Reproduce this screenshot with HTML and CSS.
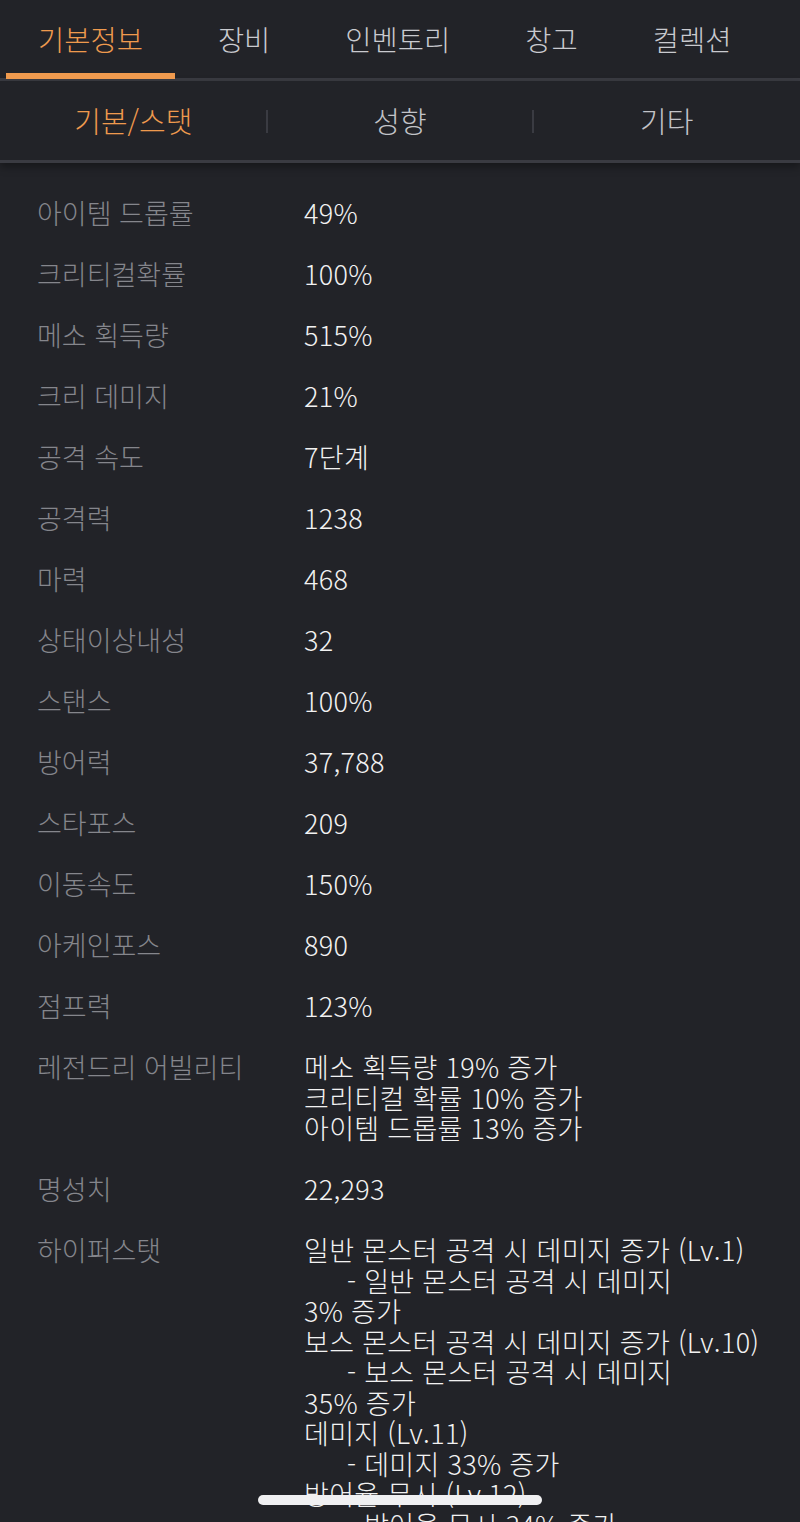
FILE: index.html
```html
<!DOCTYPE html>
<html lang="ko">
<head>
    <meta charset="UTF-8">
    <meta name="viewport" content="width=device-width, initial-scale=1.0">
    <title>캐릭터 정보</title>
    <link rel="stylesheet" href="styles.css">
</head>
<body>

    <nav class="tabs">
        <div class="tab active">기본정보</div>
        <div class="tab">장비</div>
        <div class="tab">인벤토리</div>
        <div class="tab">창고</div>
        <div class="tab">컬렉션</div>
    </nav>

    <div class="subtabs">
        <div class="subtab active">기본/스탯</div>
        <div class="subtab">성향</div>
        <div class="subtab">기타</div>
    </div>

    <div class="stats">
        <div class="row"><div class="label">아이템 드롭률</div><div class="value">49%</div></div>
        <div class="row"><div class="label">크리티컬확률</div><div class="value">100%</div></div>
        <div class="row"><div class="label">메소 획득량</div><div class="value">515%</div></div>
        <div class="row"><div class="label">크리 데미지</div><div class="value">21%</div></div>
        <div class="row"><div class="label">공격 속도</div><div class="value">7단계</div></div>
        <div class="row"><div class="label">공격력</div><div class="value">1238</div></div>
        <div class="row"><div class="label">마력</div><div class="value">468</div></div>
        <div class="row"><div class="label">상태이상내성</div><div class="value">32</div></div>
        <div class="row"><div class="label">스탠스</div><div class="value">100%</div></div>
        <div class="row"><div class="label">방어력</div><div class="value">37,788</div></div>
        <div class="row"><div class="label">스타포스</div><div class="value">209</div></div>
        <div class="row"><div class="label">이동속도</div><div class="value">150%</div></div>
        <div class="row"><div class="label">아케인포스</div><div class="value">890</div></div>
        <div class="row"><div class="label">점프력</div><div class="value">123%</div></div>
        <div class="row">
            <div class="label">레전드리 어빌리티</div>
            <div class="value">
                <div>메소 획득량 19% 증가</div>
                <div>크리티컬 확률 10% 증가</div>
                <div>아이템 드롭률 13% 증가</div>
            </div>
        </div>
        <div class="row"><div class="label">명성치</div><div class="value">22,293</div></div>
        <div class="row">
            <div class="label">하이퍼스탯</div>
            <div class="value">
                <div>일반 몬스터 공격 시 데미지 증가 (Lv.1)</div>
                <div class="sub">- 일반 몬스터 공격 시 데미지</div>
                <div>3% 증가</div>
                <div>보스 몬스터 공격 시 데미지 증가 (Lv.10)</div>
                <div class="sub">- 보스 몬스터 공격 시 데미지</div>
                <div>35% 증가</div>
                <div>데미지 (Lv.11)</div>
                <div class="sub">- 데미지 33% 증가</div>
                <div>방어율 무시 (Lv.12)</div>
                <div class="sub">- 방어율 무시 34% 증가</div>
            </div>
        </div>
    </div>

    <div class="home-indicator"></div>

</body>
</html>
```

FILE: styles.css
```css
body {
    margin: 0;
    padding: 0;
    background-color: #222328;
    font-family: "Noto Sans CJK KR", "Noto Sans", sans-serif;
    font-weight: 300;
    color: #f2f2f2;
}

/* Top tabs */
.tabs {
    display: flex;
    gap: 11px;
    padding-left: 6px;
    height: 78px;
    border-bottom: 3px solid #3a3b42;
}

.tab {
    position: relative;
    padding: 0 32px;
    font-size: 28.5px;
    line-height: 78px;
    color: #c9cacf;
}

.tab.active {
    color: #ef9a4e;
}

.tab.active::after {
    content: '';
    position: absolute;
    left: 0;
    right: 0;
    bottom: -1px;
    height: 6px;
    background-color: #ef9a4e;
}

/* Sub tabs */
.subtabs {
    display: grid;
    grid-template-columns: 1fr 1fr 1fr;
    height: 79px;
    border-bottom: 3px solid #3a3b42;
    box-shadow: 0 4px 8px rgba(0, 0, 0, 0.35);
}

.subtab {
    position: relative;
    text-align: center;
    font-size: 29px;
    line-height: 79px;
    color: #c2c3c8;
}

.subtab.active {
    color: #ef9a4e;
}

.subtab + .subtab::before {
    content: '';
    position: absolute;
    left: -1px;
    top: 29px;
    width: 2px;
    height: 23px;
    background-color: #3a3b42;
}

/* Stat list */
.stats {
    padding: 35px 0 0 37px;
}

.row {
    display: grid;
    grid-template-columns: 267px 1fr;
    font-size: 27px;
    line-height: 30.5px;
    margin-bottom: 30.5px;
}

.label {
    color: #85868c;
}

.value {
    color: #f2f2f2;
    letter-spacing: 0.3px;
}

.value .sub {
    padding-left: 43px;
}

.home-indicator {
    position: fixed;
    left: 258px;
    bottom: 17px;
    width: 284px;
    height: 10px;
    border-radius: 5px;
    background-color: #f0f0f2;
}
```
